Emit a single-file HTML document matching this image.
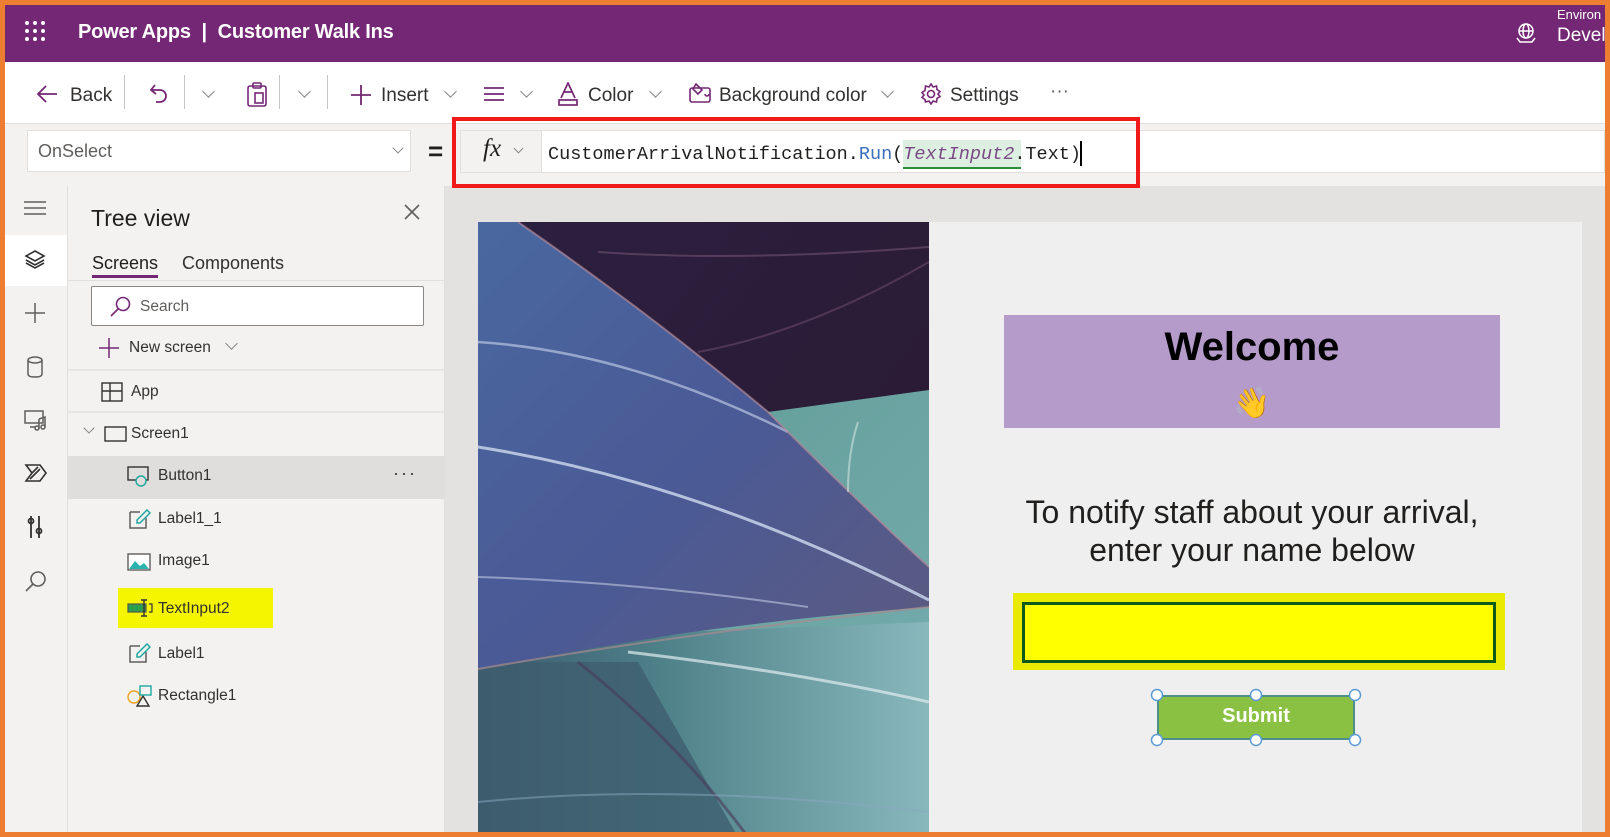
<!DOCTYPE html>
<html><head><meta charset="utf-8">
<style>
*{box-sizing:border-box;margin:0;padding:0}
body{width:1610px;height:837px;overflow:hidden;background:#ed7d31;font-family:"Liberation Sans",sans-serif;position:relative}
.abs{position:absolute}
#frame{position:absolute;left:5px;top:5px;width:1600px;height:827px;background:#e3e2e1;overflow:hidden}
.hdr{left:0;top:0;width:1600px;height:57px;background:#742774;color:#fff}
.tb{left:0;top:57px;width:1600px;height:62px;background:#fff;border-bottom:1px solid #e1dfdd}
.tbt{position:absolute;top:80px;font-size:19px;color:#323130;line-height:22px}
.sep{position:absolute;top:70px;width:1px;height:34px;background:#c8c6c4}
.chev{position:absolute;width:9px;height:9px;border-right:1.5px solid #8a8886;border-bottom:1.5px solid #8a8886;transform:rotate(45deg)}
.fr{left:0;top:119px;width:1600px;height:62px;background:#f3f2f1}
.rail{left:0;top:181px;width:63px;height:646px;background:#f3f2f1;border-right:1px solid #e1dfdd}
.tree{left:63px;top:181px;width:377px;height:646px;background:#f3f2f1;border-right:1px solid #e1dfdd}
.ti{position:absolute;font-size:15.5px;color:#323130;line-height:18px}
</style></head><body>
<div id="frame">
<div class="abs hdr">
 <svg class="abs" style="left:19px;top:15px" width="22" height="22" viewBox="0 0 22 22" fill="#fff">
  <circle cx="3" cy="3" r="2"/><circle cx="11" cy="3" r="2"/><circle cx="19" cy="3" r="2"/>
  <circle cx="3" cy="11" r="2"/><circle cx="11" cy="11" r="2"/><circle cx="19" cy="11" r="2"/>
  <circle cx="3" cy="19" r="2"/><circle cx="11" cy="19" r="2"/><circle cx="19" cy="19" r="2"/></svg>
 <div class="abs" style="left:73px;top:16px;font-size:20px;font-weight:bold;letter-spacing:-0.2px">Power Apps&nbsp; | &nbsp;Customer Walk Ins</div>
 <svg class="abs" style="left:1510px;top:17px" width="22" height="22" viewBox="0 0 22 22" fill="none" stroke="#fff" stroke-width="1.5">
  <circle cx="11" cy="9" r="7"/><ellipse cx="11" cy="9" rx="3" ry="7"/><path d="M4 9h14M2 16l3 4h12l3-4"/></svg>
 <div class="abs" style="left:1552px;top:2px;font-size:13px;color:#fff">Environ</div>
 <div class="abs" style="left:1552px;top:20px;font-size:19px;color:#fff">Devel</div>
</div>
<div class="abs tb"></div>
<svg class="abs" style="left:31px;top:79px" width="22" height="20" viewBox="0 0 22 20" fill="none" stroke="#742774" stroke-width="1.8"><path d="M21 10H2M10 2L2 10l8 8"/></svg>
<div class="tbt" style="left:65px">Back</div>
<div class="sep" style="left:119px"></div>
<svg class="abs" style="left:144px;top:78px" width="20" height="22" viewBox="0 0 20 22" fill="none" stroke="#742774" stroke-width="1.8"><path d="M6 2L2 7l5 4M2 7h9a6 6 0 010 12H7"/></svg>
<div class="sep" style="left:179px"></div>
<div class="chev" style="left:199px;top:82px"></div>
<svg class="abs" style="left:241px;top:77px" width="22" height="26" viewBox="0 0 22 26" fill="none" stroke="#742774" stroke-width="1.6"><rect x="2" y="4" width="18" height="20" rx="2"/><rect x="7" y="1" width="8" height="5" rx="1"/><rect x="9" y="11" width="8" height="10"/></svg>
<div class="sep" style="left:274px"></div>
<div class="chev" style="left:295px;top:82px"></div>
<div class="sep" style="left:322px"></div>
<svg class="abs" style="left:346px;top:80px" width="20" height="20" viewBox="0 0 20 20" stroke="#742774" stroke-width="1.8"><path d="M10 0v20M0 10h20"/></svg>
<div class="tbt" style="left:376px">Insert</div>
<div class="chev" style="left:441px;top:82px"></div>
<svg class="abs" style="left:479px;top:81px" width="20" height="16" viewBox="0 0 20 16" stroke="#742774" stroke-width="1.8"><path d="M0 2h20M0 8h20M0 14h20"/></svg>
<div class="chev" style="left:517px;top:82px"></div>
<svg class="abs" style="left:553px;top:77px" width="20" height="24" viewBox="0 0 20 24" fill="none" stroke="#742774" stroke-width="1.7"><path d="M3 16L10 1l7 15M6 10h8"/><rect x="1" y="18" width="18" height="5"/></svg>
<div class="tbt" style="left:583px">Color</div>
<div class="chev" style="left:646px;top:82px"></div>
<svg class="abs" style="left:684px;top:77px" width="22" height="22" viewBox="0 0 22 22" fill="none" stroke="#742774" stroke-width="1.6"><rect x="1" y="6" width="20" height="14" rx="2"/><path d="M7 2l6 6-4 4-5-5zM16 12a2 2 0 104 0"/></svg>
<div class="tbt" style="left:714px">Background color</div>
<div class="chev" style="left:878px;top:82px"></div>
<svg class="abs" style="left:915px;top:78px" width="22" height="22" viewBox="0 0 22 22" fill="none" stroke="#742774" stroke-width="1.6"><circle cx="11" cy="11" r="3.5"/><path d="M11 1l2 3 3.5-1 .5 3.5 3 2-2 2.5 2 2.5-3 2-.5 3.5-3.5-1-2 3-2-3-3.5 1L5 16.5l-3-2 2-2.5-2-2.5 3-2L5.5 3 9 4z"/></svg>
<div class="tbt" style="left:945px">Settings</div>
<div class="tbt" style="left:1045px;top:76px;color:#605e5c">···</div>
<div class="abs fr"></div>
<div class="abs" style="left:22px;top:125px;width:384px;height:42px;background:#fff;border:1px solid #e1dfdd"></div>
<div class="abs" style="left:33px;top:136px;font-size:18px;color:#605e5c">OnSelect</div>
<div class="chev" style="left:389px;top:139px;width:8px;height:8px"></div>
<div class="abs" style="left:423px;top:131px;font-size:26px;font-weight:bold;color:#201f1e">=</div>
<div class="abs" style="left:455px;top:125px;width:1145px;height:43px;background:#fff;border:1px solid #e1dfdd"></div>
<div class="abs" style="left:456px;top:126px;width:81px;height:41px;background:#f3f2f1;border-right:1px solid #e1dfdd"></div>
<div class="abs" style="left:478px;top:130px;font-family:'Liberation Serif',serif;font-style:italic;font-size:25px;color:#201f1e">fx</div>
<div class="chev" style="left:510px;top:140px;width:7px;height:7px"></div>
<div class="abs" style="left:898px;top:135px;width:118px;height:29px;background:#dcefe0;border-bottom:2px solid #2e8b3a"></div>
<div class="abs" style="left:543px;top:139px;font-family:'Liberation Mono',monospace;font-size:18.5px;color:#201f1e;white-space:pre">CustomerArrivalNotification.<span style="color:#3a6ec0">Run</span>(<i style="color:#7a4a85">TextInput2</i>.Text)</div>
<div class="abs" style="left:1075px;top:136px;width:2px;height:25px;background:#000"></div>
<div class="abs" style="left:447px;top:112px;width:688px;height:71px;border:4px solid #f01a1a"></div>
<div class="abs rail"></div>
<div class="abs" style="left:0;top:230px;width:62px;height:51px;background:#fff"></div>
<svg class="abs" style="left:19px;top:196px" width="22" height="14" viewBox="0 0 22 14" stroke="#605e5c" stroke-width="1.4"><path d="M0 1h22M0 7h22M0 13h22"/></svg>
<svg class="abs" style="left:19px;top:244px" width="22" height="20" viewBox="0 0 22 20" fill="none" stroke="#323130" stroke-width="1.6"><path d="M11 2l9 5-9 5-9-5zM2 11l9 5 9-5M2 14l9 5 9-5"/></svg>
<svg class="abs" style="left:20px;top:298px" width="20" height="20" viewBox="0 0 20 20" stroke="#605e5c" stroke-width="1.5"><path d="M10 0v20M0 10h20"/></svg>
<svg class="abs" style="left:21px;top:351px" width="18" height="22" viewBox="0 0 18 22" fill="none" stroke="#605e5c" stroke-width="1.5"><ellipse cx="9" cy="4" rx="7" ry="3"/><path d="M2 4v14c0 2 3 3 7 3s7-1 7-3V4"/></svg>
<svg class="abs" style="left:19px;top:404px" width="24" height="22" viewBox="0 0 24 22" fill="none" stroke="#605e5c" stroke-width="1.5"><rect x="1" y="2" width="18" height="12"/><path d="M6 18h6M15 10v10M15 10l6-2v10"/><circle cx="13" cy="19" r="2"/><circle cx="19" cy="18" r="2"/></svg>
<svg class="abs" style="left:19px;top:458px" width="24" height="20" viewBox="0 0 24 20" fill="none" stroke="#323130" stroke-width="1.6"><path d="M2 2h14l6 8-6 8H2l6-8zM8 10l6-6M6 16l10-10"/></svg>
<svg class="abs" style="left:22px;top:510px" width="16" height="24" viewBox="0 0 16 24" fill="none" stroke="#323130" stroke-width="1.8"><path d="M4 1v22M12 1v22"/><circle cx="4" cy="6" r="2.5"/><circle cx="12" cy="16" r="2.5"/></svg>
<svg class="abs" style="left:20px;top:565px" width="22" height="22" viewBox="0 0 22 22" fill="none" stroke="#605e5c" stroke-width="1.6"><circle cx="13" cy="9" r="7"/><path d="M8 14l-7 7"/></svg>
<div class="abs tree"></div>
<div class="abs" style="left:86px;top:200px;font-size:23px;color:#201f1e">Tree view</div>
<svg class="abs" style="left:399px;top:199px" width="16" height="16" viewBox="0 0 16 16" stroke="#605e5c" stroke-width="1.6"><path d="M1 1l14 14M15 1L1 15"/></svg>
<div class="abs" style="left:87px;top:248px;font-size:18px;color:#201f1e">Screens</div>
<div class="abs" style="left:87px;top:270px;width:66px;height:3px;background:#742774"></div>
<div class="abs" style="left:177px;top:248px;font-size:18px;color:#323130">Components</div>
<div class="abs" style="left:63px;top:275px;width:377px;height:1px;background:#e1dfdd"></div>
<div class="abs" style="left:86px;top:281px;width:333px;height:40px;background:#fff;border:1px solid #8a8886;border-radius:2px"></div>
<svg class="abs" style="left:105px;top:290px" width="22" height="22" viewBox="0 0 22 22" fill="none" stroke="#742774" stroke-width="1.6"><circle cx="13" cy="9" r="6.5"/><path d="M8 14l-7 7"/></svg>
<div class="ti" style="left:135px;top:293px;color:#605e5c">Search</div>
<svg class="abs" style="left:94px;top:333px" width="20" height="20" viewBox="0 0 20 20" stroke="#742774" stroke-width="1.5"><path d="M10 0v20M0 10h20"/></svg>
<div class="ti" style="left:124px;top:334px">New screen</div>
<div class="chev" style="left:222px;top:334px"></div>
<div class="abs" style="left:63px;top:364px;width:377px;height:2px;background:#e6e5e4"></div>
<svg class="abs" style="left:96px;top:377px" width="22" height="20" viewBox="0 0 22 20" fill="none" stroke="#323130" stroke-width="1.4"><rect x="1" y="1" width="20" height="18"/><path d="M1 9h20M9 1v18"/></svg>
<div class="ti" style="left:126px;top:378px">App</div>
<div class="abs" style="left:63px;top:406px;width:377px;height:2px;background:#e6e5e4"></div>
<div class="chev" style="left:80px;top:419px;width:8px;height:8px"></div>
<svg class="abs" style="left:99px;top:421px" width="23" height="16" viewBox="0 0 23 16" fill="none" stroke="#323130" stroke-width="1.4"><rect x="1" y="1" width="21" height="14"/></svg>
<div class="ti" style="left:126px;top:420px">Screen1</div>
<div class="abs" style="left:63px;top:451px;width:377px;height:43px;background:#dfdedd"></div>
<svg class="abs" style="left:122px;top:461px" width="24" height="22" viewBox="0 0 24 22" fill="none" stroke="#323130" stroke-width="1.4"><rect x="1" y="1" width="20" height="13"/><circle cx="14" cy="15" r="5" stroke="#1ea7a0" fill="#dfdedd"/></svg>
<div class="ti" style="left:153px;top:462px">Button1</div>
<div class="abs" style="left:388px;top:458px;font-size:18px;color:#323130;letter-spacing:2px">···</div>
<svg class="abs" style="left:124px;top:504px" width="22" height="20" viewBox="0 0 22 20" fill="none" stroke="#605e5c" stroke-width="1.5"><path d="M1 3h10M1 3v16h16V9"/><path d="M18 1l3 3-10 10H8v-3z" stroke="#1ea7a0"/></svg>
<div class="ti" style="left:153px;top:505px">Label1_1</div>
<svg class="abs" style="left:122px;top:548px" width="24" height="18" viewBox="0 0 24 18"><rect x="1" y="1" width="22" height="16" fill="#fff" stroke="#605e5c" stroke-width="1.4"/><path d="M2 16l6-8 5 5 4-3 5 6z" fill="#2ab3ad"/></svg>
<div class="ti" style="left:153px;top:547px">Image1</div>
<div class="abs" style="left:113px;top:583px;width:155px;height:40px;background:#f5f500"></div>
<svg class="abs" style="left:122px;top:594px" width="26" height="18" viewBox="0 0 26 18" fill="none"><rect x="1" y="5" width="18" height="8" fill="#2aa04a" stroke="#555" stroke-width="1.2"/><path d="M17 1v16M14 1h6M14 17h6" stroke="#323130" stroke-width="1.4"/><path d="M22 5h3v8h-3" stroke="#323130" stroke-width="1.2"/></svg>
<div class="ti" style="left:153px;top:595px">TextInput2</div>
<svg class="abs" style="left:124px;top:638px" width="22" height="20" viewBox="0 0 22 20" fill="none" stroke="#605e5c" stroke-width="1.5"><path d="M1 3h10M1 3v16h16V9"/><path d="M18 1l3 3-10 10H8v-3z" stroke="#1ea7a0"/></svg>
<div class="ti" style="left:153px;top:640px">Label1</div>
<svg class="abs" style="left:122px;top:680px" width="26" height="22" viewBox="0 0 26 22" fill="none" stroke-width="1.4"><circle cx="7" cy="12" r="6" stroke="#f0a020"/><path d="M10 21l6-10 6 10z" stroke="#323130"/><rect x="13" y="1" width="11" height="9" stroke="#1ea7a0"/></svg>
<div class="ti" style="left:153px;top:682px">Rectangle1</div>
<div class="abs" style="left:473px;top:217px;width:1104px;height:620px;background:#efefef"></div>
<svg class="abs" style="left:473px;top:217px" width="451" height="615" viewBox="0 0 451 615" preserveAspectRatio="none">
 <defs>
  <linearGradient id="g1" x1="0" y1="0" x2="1" y2="1"><stop offset="0" stop-color="#2c2040"/><stop offset="1" stop-color="#2a1830"/></linearGradient>
  <linearGradient id="g2" x1="0" y1="0" x2="1" y2="1"><stop offset="0" stop-color="#4a68a0"/><stop offset=".5" stop-color="#4a5a96"/><stop offset="1" stop-color="#5c5a80"/></linearGradient>
  <linearGradient id="g3" x1="0" y1="0" x2="1" y2="1"><stop offset="0" stop-color="#5e9a92"/><stop offset="1" stop-color="#78aeb2"/></linearGradient>
  <linearGradient id="g4" x1="0" y1="0" x2="1" y2="0"><stop offset="0" stop-color="#3a5a70"/><stop offset=".4" stop-color="#4e8088"/><stop offset="1" stop-color="#88b8bc"/></linearGradient>
 </defs>
 <rect width="451" height="615" fill="url(#g1)"/>
 <path d="M290 190 L451 168 L451 615 L0 615 L0 440 Z" fill="url(#g3)"/>
 <path d="M0 440 L200 410 L451 400 L451 615 L0 615 Z" fill="url(#g4)"/>
 <path d="M0 440 L160 440 L260 615 L0 615 Z" fill="#3e5e6e" opacity=".8"/>
 <path d="M0 0 L40 0 Q170 90 290 190 Q380 280 451 345 L451 385 Q320 395 200 412 Q90 430 0 447 Z" fill="url(#g2)"/>
 <path d="M0 225 Q220 260 451 378" stroke="#c8d4ea" stroke-width="3" fill="none" opacity=".85"/>
 <path d="M0 120 Q150 130 310 210" stroke="#b8c4e0" stroke-width="2.5" fill="none" opacity=".7"/>
 <path d="M0 355 Q160 360 330 385" stroke="#c0c8e0" stroke-width="2" fill="none" opacity=".6"/>
 <path d="M40 0 Q170 90 290 190 Q380 280 451 345" stroke="#b08a9a" stroke-width="2" fill="none" opacity=".7"/>
 <path d="M0 447 Q200 412 451 385" stroke="#a88a90" stroke-width="2" fill="none" opacity=".7"/>
 <path d="M150 430 Q320 450 451 480" stroke="#e0ecf0" stroke-width="3" fill="none" opacity=".7"/>
 <path d="M100 440 Q200 520 270 615" stroke="#4a3a5a" stroke-width="3" fill="none" opacity=".6"/>
 <path d="M120 30 Q260 40 451 25" stroke="#6a4a6a" stroke-width="2" fill="none" opacity=".7"/>
 <path d="M220 130 Q330 110 451 40" stroke="#6a4a6a" stroke-width="2" fill="none" opacity=".6"/>
 <path d="M380 200 Q370 230 370 270" stroke="#d0e4e0" stroke-width="2" fill="none" opacity=".6"/>
 <path d="M0 580 Q200 560 451 590" stroke="#8aa8c0" stroke-width="2" fill="none" opacity=".5"/>
</svg>
<div class="abs" style="left:999px;top:310px;width:496px;height:113px;background:#b59bca"></div>
<div class="abs" style="left:999px;top:320px;width:496px;text-align:center;font-size:40px;font-weight:bold;color:#000">Welcome</div>
<div class="abs" style="left:999px;top:382px;width:496px;text-align:center;font-size:30px;line-height:34px">👋</div>
<div class="abs" style="left:960px;top:488px;width:574px;text-align:center;font-size:32px;line-height:38px;color:#201f1e">To notify staff about your arrival,<br>enter your name below</div>
<div class="abs" style="left:1008px;top:588px;width:492px;height:77px;background:#eaea00"></div>
<div class="abs" style="left:1017px;top:597px;width:474px;height:61px;background:#ffff00;border:3px solid #0b5a1a"></div>
<div class="abs" style="left:1152px;top:690px;width:198px;height:45px;background:#8bc142;border:2px solid #4e8f8a"></div>
<div class="abs" style="left:1152px;top:700px;width:198px;text-align:center;font-size:20px;font-weight:bold;color:#fff">Submit</div>
<svg class="abs" style="left:1143px;top:681px" width="216" height="63" viewBox="0 0 216 63" fill="#fff" stroke="#5b9bd5" stroke-width="1.5">
 <circle cx="9" cy="9" r="5.5"/><circle cx="108" cy="9" r="5.5"/><circle cx="207" cy="9" r="5.5"/>
 <circle cx="9" cy="54" r="5.5"/><circle cx="108" cy="54" r="5.5"/><circle cx="207" cy="54" r="5.5"/></svg>
</div>
</body></html>
